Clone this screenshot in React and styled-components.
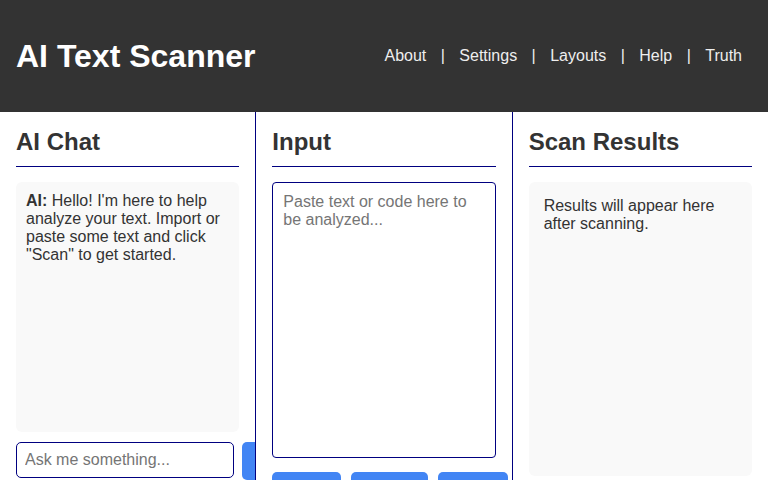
import React from 'react';
import styled, { createGlobalStyle } from 'styled-components';

const GlobalStyle = createGlobalStyle`
    body {
        margin: 0;
        font-family: 'Liberation Sans', Arial, sans-serif;
        color: #333;
        background: #fff;
    }
`;

const Header = styled.header`
    display: flex;
    align-items: center;
    justify-content: space-between;
    height: 112px;
    padding: 0 16px;
    background: #333;
    color: #fff;
`;

const Title = styled.h1`
    margin: 0;
    font-size: 32px;
    font-weight: bold;
`;

const Nav = styled.nav`
    font-size: 16px;
    color: #eee;
`;

const NavLink = styled.a`
    margin: 0 10px;
    color: #eee;
    text-decoration: none;
    cursor: pointer;
`;

const Main = styled.main`
    display: flex;
`;

const Column = styled.section`
    flex: 1 1 0;
    min-width: 0;
    padding: 16px;
    overflow: ${props => (props.$clip ? 'hidden' : 'visible')};
    border-right: ${props => (props.$divider ? '1px solid #000080' : 'none')};
`;

const Heading = styled.h2`
    margin: 0 0 15px;
    padding-bottom: 10px;
    font-size: 24px;
    font-weight: bold;
    color: #333;
    border-bottom: 1px solid #000080;
`;

const Panel = styled.div`
    box-sizing: border-box;
    height: ${props => props.$height}px;
    padding: ${props => props.$pad}px;
    background: #f9f9f9;
    border-radius: 6px;
    font-size: 16px;
    line-height: normal;
`;

const ChatRow = styled.div`
    display: flex;
    gap: 8px;
    margin-top: 10px;
`;

const ChatInput = styled.input`
    box-sizing: border-box;
    flex: none;
    width: 218px;
    min-width: 0;
    height: 36px;
    padding: 0 8px;
    font-family: inherit;
    font-size: 16px;
    color: #333;
    border: 1px solid #000080;
    border-radius: 5px;
    outline: none;

    &::placeholder {
        color: #757575;
    }
`;

const Button = styled.button`
    flex-shrink: 0;
    padding: 10px 16px;
    font-family: inherit;
    font-size: 16px;
    color: #fff;
    background: #4285f4;
    border: none;
    border-radius: 5px;
    cursor: pointer;
`;

const TextArea = styled.textarea`
    display: block;
    box-sizing: border-box;
    width: 100%;
    height: 276px;
    padding: 10px;
    font-family: inherit;
    font-size: 16px;
    line-height: normal;
    color: #333;
    border: 1px solid #000080;
    border-radius: 4px;
    resize: none;
    outline: none;

    &::placeholder {
        color: #757575;
    }
`;

const ButtonRow = styled.div`
    display: flex;
    gap: 10px;
    margin-top: 14px;
`;

const navItems = ['About', 'Settings', 'Layouts', 'Help', 'Truth'];

const App = () => (
    <>
        <GlobalStyle />
        <Header>
            <Title>AI Text Scanner</Title>
            <Nav>
                {navItems.map((item, i) => (
                    <React.Fragment key={item}>
                        {i > 0 && ' | '}
                        <NavLink>{item}</NavLink>
                    </React.Fragment>
                ))}
            </Nav>
        </Header>
        <Main>
            <Column $divider $clip>
                <Heading>AI Chat</Heading>
                <Panel $height={250} $pad={10}>
                    <strong>AI:</strong> Hello! I'm here to help analyze your
                    text. Import or paste some text and click "Scan" to get
                    started.
                </Panel>
                <ChatRow>
                    <ChatInput placeholder="Ask me something..." />
                    <Button>Send</Button>
                </ChatRow>
            </Column>
            <Column $divider>
                <Heading>Input</Heading>
                <TextArea placeholder="Paste text or code here to be analyzed..." />
                <ButtonRow>
                    <Button>Scan</Button>
                    <Button>Import</Button>
                    <Button>Clear</Button>
                </ButtonRow>
            </Column>
            <Column>
                <Heading>Scan Results</Heading>
                <Panel $height={294} $pad={15}>
                    Results will appear here after scanning.
                </Panel>
            </Column>
        </Main>
    </>
);

export default App;
